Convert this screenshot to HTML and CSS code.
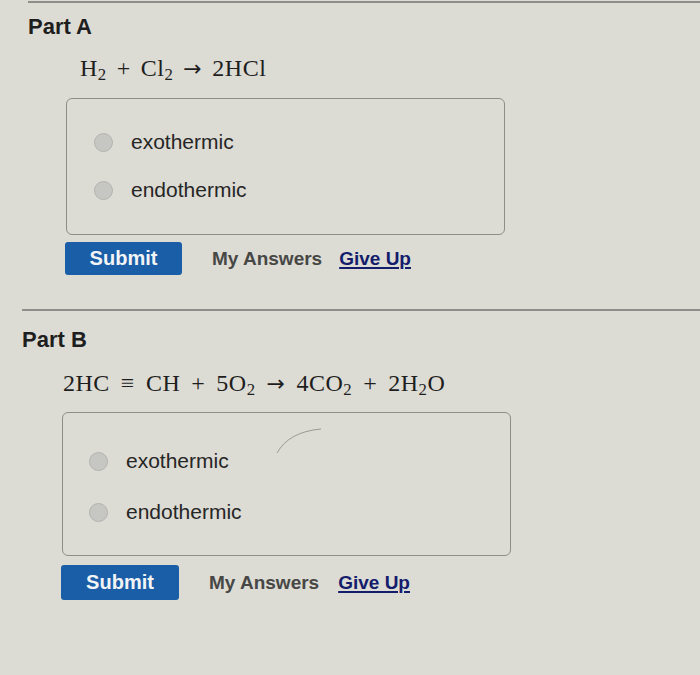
FILE: index.html
```html
<!DOCTYPE html>
<html>
<head>
  <meta charset="utf-8">
  <link rel="stylesheet" href="styles.css">
</head>
<body>
  <!-- Part A -->
  <div class="part part-a">
    <h2 class="part-title">Part A</h2>
    <div class="equation">H<sub>2</sub><span class="op">+</span>Cl<sub>2</sub><span class="op arrow">→</span>2HCl</div>
    <div class="choices">
      <label class="choice"><span class="radio"></span>exothermic</label>
      <label class="choice"><span class="radio"></span>endothermic</label>
    </div>
    <div class="actions">
      <button class="submit">Submit</button>
      <span class="my-answers">My Answers</span>
      <a class="give-up" href="#">Give Up</a>
    </div>
  </div>

  <!-- Part B -->
  <div class="part part-b">
    <h2 class="part-title">Part B</h2>
    <div class="equation">2HC<span class="op">≡</span>CH<span class="op">+</span>5O<sub>2</sub><span class="op arrow">→</span>4CO<sub>2</sub><span class="op">+</span>2H<sub>2</sub>O</div>
    <div class="choices">
      <svg class="smudge" width="50" height="30" viewBox="0 0 50 30">
        <path d="M2 28 C 10 14, 24 6, 46 4" fill="none" stroke="#9a9a96" stroke-width="1"/>
      </svg>
      <label class="choice"><span class="radio"></span>exothermic</label>
      <label class="choice"><span class="radio"></span>endothermic</label>
    </div>
    <div class="actions">
      <button class="submit">Submit</button>
      <span class="my-answers">My Answers</span>
      <a class="give-up" href="#">Give Up</a>
    </div>
  </div>
</body>
</html>
```

FILE: styles.css
```css
body {
  margin: 0;
  padding-top: 1px;
  background: #dcdbd4;
  color: #222;
  font-family: "Liberation Sans", Arial, sans-serif;
}

.part {
  border-top: 2px solid #8e8e8b;
}

.part-a {
  margin-left: 28px;
  padding-top: 11px;
}

.part-b {
  margin-left: 22px;
  margin-top: 34px;
  padding-top: 16px;
}

.part-title {
  margin: 0;
  font-size: 22px;
  line-height: 26px;
  font-weight: bold;
  color: #1e1e1e;
}

/* Equations */
.equation {
  font-family: "Liberation Serif", "DejaVu Serif", serif;
  font-size: 24px;
  line-height: 30px;
  letter-spacing: 0.5px;
  color: #1e1e1e;
}

.part-a .equation {
  margin: 13px 0 0 52px;
}

.part-b .equation {
  margin: 15px 0 0 41px;
}

.equation sub {
  font-size: 0.7em;
  vertical-align: -0.25em;
  line-height: 0;
}

.op {
  margin: 0 10px;
}

.part-b .op {
  margin: 0 11px;
}

.arrow {
  font-family: "DejaVu Sans", sans-serif;
  font-size: 22px;
}

/* Answer box */
.choices {
  position: relative;
  border: 1.5px solid #8d8d8a;
  border-radius: 6px;
  display: flex;
  flex-direction: column;
  box-sizing: border-box;
}

.part-a .choices {
  margin: 14px 0 0 38px;
  width: 439px;
  height: 137px;
  padding: 30px 0 0 27px;
  gap: 22px;
}

.part-b .choices {
  margin: 13px 0 0 40px;
  width: 449px;
  height: 144px;
  padding: 35px 0 0 26px;
  gap: 25px;
}

.choice {
  display: flex;
  align-items: center;
  height: 26px;
  font-size: 21px;
  color: #262626;
}

.radio {
  width: 17px;
  height: 17px;
  border-radius: 50%;
  background: #c6c6c2;
  border: 1px solid #b4b4b0;
  margin-right: 18px;
  flex: none;
}

.smudge {
  position: absolute;
  left: 212px;
  top: 12px;
}

/* Buttons row */
.actions {
  display: flex;
  align-items: center;
  font-weight: bold;
  font-size: 19px;
}

.part-a .actions {
  margin: 7px 0 0 37px;
}

.part-b .actions {
  margin: 9px 0 0 39px;
}

.submit {
  width: 117px;
  height: 33px;
  background: #1a5ea8;
  color: #f2f4f6;
  border: none;
  border-radius: 3px;
  font-family: "Liberation Sans", Arial, sans-serif;
  font-weight: bold;
  font-size: 20px;
  padding: 0;
}

.part-b .submit {
  width: 118px;
  height: 35px;
}

.my-answers {
  color: #474745;
  margin-left: 30px;
}

.give-up {
  color: #141c6c;
  text-decoration: underline;
  text-decoration-thickness: 2px;
  text-underline-offset: 2px;
  margin-left: 17px;
}

.part-b .give-up {
  margin-left: 19px;
}
```
